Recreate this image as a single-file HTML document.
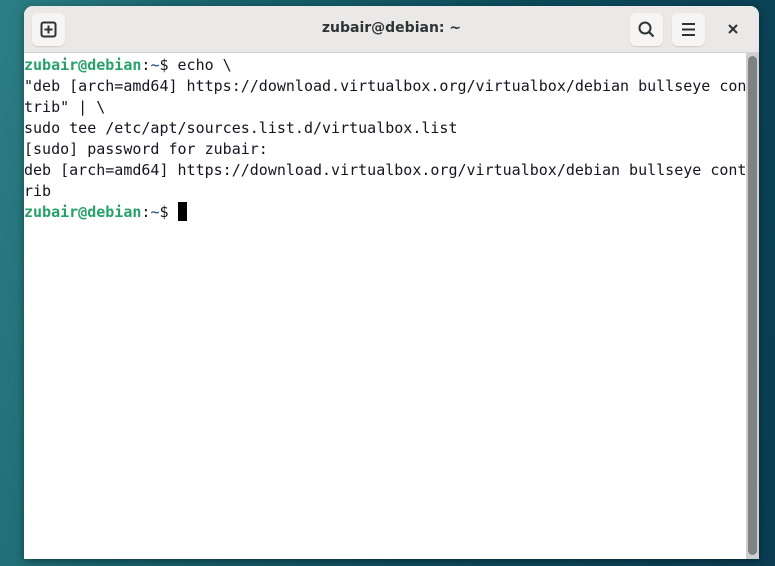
<!DOCTYPE html>
<html><head><style>
html,body{margin:0;padding:0;width:775px;height:566px;overflow:hidden;}
body{background:linear-gradient(100deg,#2c7f84 0%,#1a6670 20%,#0d4b5c 60%,#0a3d52 100%);position:relative;font-family:"DejaVu Sans Mono","Liberation Mono",monospace;}
.win{position:absolute;left:24px;top:6px;width:735px;height:553px;background:#fff;border-radius:9px 9px 0 0;overflow:hidden;box-shadow:0 2px 8px rgba(0,0,0,.4);}
.hdr{height:46px;background:#ebe9e7;border-bottom:1px solid #d6d3d0;position:relative;}
.btn{position:absolute;top:7px;width:33px;height:33px;background:#f6f5f4;border-radius:6px;box-shadow:0 1px 1px rgba(0,0,0,.12);}
.title{position:absolute;left:0;right:0;top:14px;text-align:center;font-family:"DejaVu Sans","Liberation Sans",sans-serif;font-weight:bold;font-size:14px;color:#2e3436;}
.term{position:absolute;left:0;top:49px;font-size:15px;line-height:21px;color:#171421;white-space:pre;}
.g{color:#26a269;font-weight:bold}.b{color:#12488b}
.track{position:absolute;right:0;top:47px;width:13px;bottom:0;background:#cfcfcf;}
.thumb{position:absolute;left:2px;top:3px;width:9px;bottom:4px;background:#7d8283;border-radius:5px;}
.cur{display:inline-block;width:9px;height:19px;background:#000;vertical-align:-4px;}
</style></head><body>
<div class="win">
<div class="hdr">
<div class="btn" style="left:8px"><svg width="33" height="33"><rect x="9.5" y="9.5" width="14" height="14" rx="2" fill="none" stroke="#2e3436" stroke-width="2"/><path d="M16.5 12.5v8M12.5 16.5h8" stroke="#2e3436" stroke-width="2"/></svg></div>
<div class="title">zubair@debian: ~</div>
<div class="btn" style="left:606px"><svg width="33" height="33"><circle cx="15" cy="15" r="5.5" fill="none" stroke="#2e3436" stroke-width="2"/><path d="M19 19l4.5 4.5" stroke="#2e3436" stroke-width="2.2"/></svg></div>
<div class="btn" style="left:648px"><svg width="33" height="33"><path d="M10 11h13M10 16.5h13M10 22h13" stroke="#2e3436" stroke-width="2"/></svg></div>
<svg style="position:absolute;left:702px;top:16px" width="14" height="14"><path d="M3 3l8 8M11 3l-8 8" stroke="#2e3436" stroke-width="2"/></svg>
</div>
<div class="term"><span class="g">zubair@debian</span>:<span class="b">~</span>$ echo \
"deb [arch=amd64] https://download.virtualbox.org/virtualbox/debian bullseye con
trib" | \
sudo tee /etc/apt/sources.list.d/virtualbox.list
[sudo] password for zubair: 
deb [arch=amd64] https://download.virtualbox.org/virtualbox/debian bullseye cont
rib
<span class="g">zubair@debian</span>:<span class="b">~</span>$ <span class="cur"></span></div>
<div class="track"><div class="thumb"></div></div>
</div>
</body></html>
